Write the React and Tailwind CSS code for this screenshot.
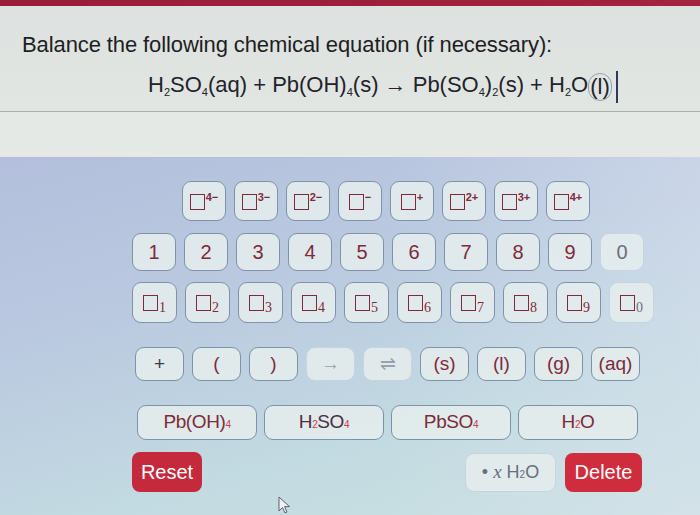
import React from "react";

const maroon = "text-[#7e2a3a]";

function Key({ children, className = "", dim = false }) {
    return (
        <div
            className={
                "flex items-center justify-center rounded-[9px] border-[1.5px] bg-[#e3ecec]/90 " +
                (dim ? "border-[#c9d3dc] " : "border-[#7f92a8] ") +
                className
            }
        >
            {children}
        </div>
    );
}

function Box({ className = "" }) {
    return <span className={"inline-block w-[15px] h-[16px] border-[1.5px] border-[#7e2a3a] " + className} />;
}

function Sub({ children }) {
    return <span className="text-[11px] relative top-[4px]">{children}</span>;
}

export default function App() {
    const charges = ["4−", "3−", "2−", "−", "+", "2+", "3+", "4+"];
    const digits = ["1", "2", "3", "4", "5", "6", "7", "8", "9", "0"];
    const symbols = [
        { t: "+", c: "text-[#3b3b45]" },
        { t: "(", c: maroon },
        { t: ")", c: maroon },
        { t: "→", c: "text-[#9aa0ad]", dim: true },
        { t: "⇌", c: "text-[#9aa0ad]", dim: true },
        { t: "(s)", c: maroon },
        { t: "(l)", c: maroon },
        { t: "(g)", c: maroon },
        { t: "(aq)", c: maroon },
    ];

    return (
        <div className="w-[700px] h-[515px] overflow-hidden flex flex-col relative font-['Liberation_Sans',Arial,sans-serif]">
            <div className="h-[6px] bg-[linear-gradient(90deg,#9a1d3a,#a3223d)]" />

            <div className="h-[106px] bg-[linear-gradient(180deg,#dde1df,#e2e6e3)] border-b border-[#a8adae] pl-[22px] pt-[26px]">
                <div className="text-[22px] text-[#1e1e22] tracking-[-0.1px] leading-[26px]">
                    Balance the following chemical equation (if necessary):
                </div>
                <div className="mt-[12px] ml-[126px] flex items-center text-[22px] text-[#22222a] leading-[30px]">
                    <span>
                        H<Sub>2</Sub>SO<Sub>4</Sub>(aq) + Pb(OH)<Sub>4</Sub>(s) → Pb(SO<Sub>4</Sub>)<Sub>2</Sub>(s) + H
                        <Sub>2</Sub>O
                    </span>
                    <span className="border-[1.5px] border-[#9aa0aa] rounded-full px-[1px] leading-[26px]">(l)</span>
                    <span className="ml-[4px] w-[2px] h-[32px] bg-[#2c3a5e]" />
                </div>
            </div>

            <div className="h-[45px] bg-[#e4e9e6]" />

            <div className="flex-1 bg-[linear-gradient(165deg,#b3bfdc_0%,#bac9e0_35%,#c2dae1_70%,#cbe2e2_100%)] relative">
                <div className="absolute inset-0 bg-[linear-gradient(90deg,transparent_55%,rgba(220,226,240,0.45)_100%)]" />
                <div className="relative pl-[132px] pt-[24px] flex flex-col">
                    <div className="flex gap-[8px] ml-[50px] h-[40px]">
                        {charges.map((c) => (
                            <Key key={c} className="w-[44px]">
                                <span className={"flex items-start " + maroon}>
                                    <Box className="mt-[2px]" />
                                    <span className="text-[11px] font-bold leading-[11px] ml-[1px]">{c}</span>
                                </span>
                            </Key>
                        ))}
                    </div>

                    <div className="flex gap-[8px] mt-[12px] h-[38px]">
                        {digits.map((d) => (
                            <Key
                                key={d}
                                dim={d === "0"}
                                className={"w-[44px] text-[20px] " + (d === "0" ? "text-[#6c6f7c]" : maroon)}
                            >
                                {d}
                            </Key>
                        ))}
                    </div>

                    <div className="flex gap-[8px] mt-[11px] h-[41px]">
                        {digits.map((d) => (
                            <Key key={d} dim={d === "0"} className="w-[45px]">
                                <span className={"flex items-end " + (d === "0" ? "text-[#6c6f7c]" : maroon)}>
                                    <Box className={d === "0" ? "border-[#6c6f7c]" : ""} />
                                    <span className="font-['Liberation_Serif',serif] text-[14px] leading-[11px] ml-[1px] translate-y-[2px]">
                                        {d}
                                    </span>
                                </span>
                            </Key>
                        ))}
                    </div>

                    <div className="flex gap-[8px] mt-[24px] ml-[3px] h-[34px]">
                        {symbols.map((s) => (
                            <Key key={s.t} dim={s.dim} className={"w-[49px] text-[19px] " + s.c}>
                                {s.t}
                            </Key>
                        ))}
                    </div>

                    <div className="flex gap-[7px] mt-[24px] ml-[5px] h-[35px] text-[19px] text-[#7e2a3a] tracking-[-0.4px]">
                        <Key className="w-[120px]">
                            <span>
                                Pb(OH)<span className="text-[10px] text-[#c2414f]">4</span>
                            </span>
                        </Key>
                        <Key className="w-[120px]">
                            <span className="text-[#4a3040]">
                                H<span className="text-[10px] text-[#c2414f]">2</span>SO
                                <span className="text-[10px] text-[#c2414f]">4</span>
                            </span>
                        </Key>
                        <Key className="w-[120px]">
                            <span>
                                PbSO<span className="text-[10px] text-[#c2414f]">4</span>
                            </span>
                        </Key>
                        <Key className="w-[120px]">
                            <span>
                                H<span className="text-[10px] text-[#c2414f]">2</span>O
                            </span>
                        </Key>
                    </div>

                    <div className="flex items-center w-[510px] mt-[12px]">
                        <div className="w-[70px] h-[40px] rounded-[8px] bg-[#c42a3c] text-white text-[20px] flex items-center justify-center">
                            Reset
                        </div>
                        <div className="ml-auto flex gap-[9px] items-center">
                            <Key className="w-[91px] h-[39px] text-[18px] text-[#6a6e7a]" dim>
                                <span>
                                    • <span className="italic font-['Liberation_Serif',serif] text-[19px]">x</span> H
                                    <span className="text-[10px]">2</span>O
                                </span>
                            </Key>
                            <div className="w-[77px] h-[39px] rounded-[8px] bg-[#cf2c3d] text-white text-[20px] flex items-center justify-center">
                                Delete
                            </div>
                        </div>
                    </div>
                </div>
            </div>

            <svg className="absolute left-[278px] top-[496px]" width="14" height="19" viewBox="0 0 14 19">
                <path d="M1 1 L1 15 L4.5 11.5 L7 17 L9 16 L6.6 10.6 L11.5 10.6 Z" fill="#eef0f4" stroke="#5a6070" strokeWidth="1" strokeLinejoin="round" />
            </svg>
        </div>
    );
}
